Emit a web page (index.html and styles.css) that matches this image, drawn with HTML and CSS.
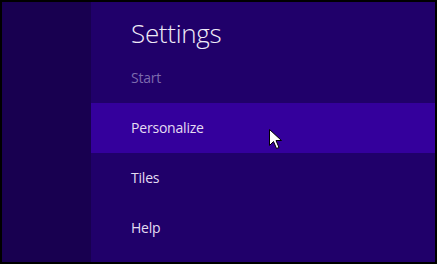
FILE: index.html
```html
<!DOCTYPE html>
<html lang="en">
<head>
    <meta charset="UTF-8">
    <title>Settings</title>
    <link rel="stylesheet" href="styles.css">
</head>
<body>
    <div class="frame">
        <div class="side"></div>
        <div class="pane">
            <h1 class="title">Settings</h1>
            <ul class="menu">
                <li class="item muted">Start</li>
                <li class="item active">Personalize
                    <svg class="cursor" width="13" height="20" viewBox="0 0 13 20">
                        <path d="M0.5 0.5 L0.5 16.5 L4.5 12.5 L7.5 19.5 L10 18.5 L7 11.5 L12.5 11.5 Z" fill="#fff" stroke="#000" stroke-width="1"/>
                    </svg>
                </li>
                <li class="item">Tiles</li>
                <li class="item">Help</li>
            </ul>
        </div>
    </div>
</body>
</html>
```

FILE: styles.css
```css
body {
    margin: 0;
    background-color: #000;
    font-family: "Open Sans", "Noto Sans", sans-serif;
}
.frame {
    display: flex;
    width: 433px;
    height: 260px;
    border: 2px solid #000;
    overflow: hidden;
}
.side {
    width: 89px;
    background-color: #180050;
}
.pane {
    flex: 1;
    background-color: #20006a;
}
.title {
    margin: 0;
    height: 51px;
    padding-left: 40px;
    font-size: 26px;
    font-weight: 300;
    letter-spacing: -0.3px;
    line-height: 62px;
    color: #f0ecf8;
}
.menu {
    list-style: none;
    margin: 0;
    padding: 0;
}
.item {
    position: relative;
    height: 50px;
    padding-left: 40px;
    font-size: 14px;
    letter-spacing: -0.2px;
    line-height: 50px;
    color: #e4dcf2;
}
.item.muted {
    color: #7c6aae;
}
.item.active {
    background-color: #34009c;
}
.cursor {
    position: absolute;
    left: 178px;
    top: 26px;
}
```
